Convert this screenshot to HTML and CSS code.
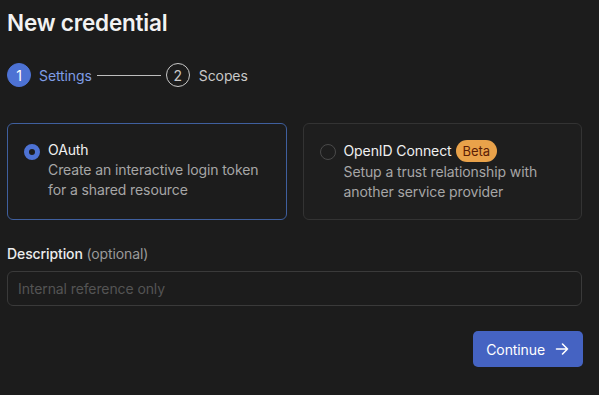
FILE: index.html
```html
<!DOCTYPE html>
<html lang="en">
<head>
    <meta charset="UTF-8">
    <meta name="viewport" content="width=device-width, initial-scale=1.0">
    <title>New credential</title>
    <link rel="stylesheet" href="styles.css">
</head>
<body>
    <main class="page">
        <h1 class="title">New credential</h1>

        <!-- Steps -->
        <div class="steps">
            <div class="step active">
                <span class="step-num">1</span>
                <span class="step-label">Settings</span>
            </div>
            <div class="step-line"></div>
            <div class="step">
                <span class="step-num">2</span>
                <span class="step-label">Scopes</span>
            </div>
        </div>

        <!-- Credential type -->
        <div class="options">
            <label class="option selected">
                <span class="radio"></span>
                <span class="option-text">
                    <span class="option-title">OAuth</span>
                    <span class="option-desc">Create an interactive login token for a shared resource</span>
                </span>
            </label>
            <label class="option">
                <span class="radio"></span>
                <span class="option-text">
                    <span class="option-title">OpenID Connect <span class="badge">Beta</span></span>
                    <span class="option-desc">Setup a trust relationship with another service provider</span>
                </span>
            </label>
        </div>

        <div class="field">
            <div class="field-label">Description <span class="muted">(optional)</span></div>
            <input class="input" type="text" placeholder="Internal reference only">
        </div>

        <div class="actions">
            <button class="btn-primary">
                Continue
                <svg width="16" height="16" viewBox="0 0 16 16" fill="none" stroke="currentColor" stroke-width="1.6" stroke-linecap="round" stroke-linejoin="round">
                    <path d="M2.5 8h11M8.5 3l5 5-5 5"/>
                </svg>
            </button>
        </div>
    </main>
</body>
</html>
```

FILE: styles.css
```css
body {
    margin: 0;
    padding: 0;
    background-color: #1c1c1c;
    color: #ececec;
    font-family: Inter, "Noto Sans", sans-serif;
    font-size: 14px;
    letter-spacing: -0.1px;
}
.page {
    width: 575px;
    padding: 8px 7px;
}
.title {
    margin: 0;
    font-size: 22.5px;
    line-height: 30px;
    font-weight: 600;
    color: #f2f2f2;
    letter-spacing: -0.2px;
}
/* Steps */
.steps {
    display: flex;
    align-items: center;
    margin-top: 25px;
    height: 24px;
}
.step {
    display: flex;
    align-items: center;
    gap: 8px;
    color: #c8c8c8;
}
.step-num {
    width: 22px;
    height: 22px;
    border: 1px solid #c8c8c8;
    border-radius: 50%;
    display: flex;
    align-items: center;
    justify-content: center;
    font-size: 14px;
}
.step.active {
    color: #7f9de6;
}
.step.active .step-num {
    background-color: #4d72d4;
    border-color: #4d72d4;
    color: #ffffff;
}
.step + .step-line,
.step-line + .step {
    margin-left: 5px;
}
.step-line {
    width: 64px;
    height: 1px;
    background-color: #bdbdbd;
}
.step:last-child {
    gap: 9px;
}
/* Options */
.options {
    display: grid;
    grid-template-columns: 1fr 1fr;
    gap: 16px;
    margin-top: 36px;
}
.option {
    display: flex;
    align-items: flex-start;
    gap: 8px;
    padding: 16px 16px 17px 16px;
    border: 1px solid #333333;
    border-radius: 6px;
    background-color: #1e1e1e;
    min-height: 61px;
}
.option.selected {
    border-color: #3f5f9e;
    background-color: #1c1c1c;
}
.radio {
    flex: none;
    width: 14px;
    height: 14px;
    margin-top: 4px;
    border: 1px solid #4a4a4a;
    border-radius: 50%;
    box-sizing: content-box;
}
.option.selected .radio {
    width: 6px;
    height: 6px;
    border: 5px solid #4d72d4;
    background-color: #1c1c1c;
}
.option-text {
    display: flex;
    flex-direction: column;
}
.option-title {
    display: flex;
    align-items: center;
    gap: 4px;
    line-height: 20px;
    color: #f0f0f0;
}
.option-desc {
    line-height: 20px;
    color: #a6a6a6;
}
.badge {
    background-color: #e9a24a;
    color: #5c1d05;
    font-size: 13px;
    line-height: 22px;
    padding: 0 7px;
    border-radius: 11px;
}
/* Field */
.field {
    margin-top: 24px;
}
.field-label {
    line-height: 20px;
    color: #ececec;
    font-weight: 500;
}
.muted {
    color: #9a9a9a;
    font-weight: 400;
}
.input {
    display: block;
    box-sizing: border-box;
    width: 100%;
    height: 35px;
    margin-top: 7px;
    padding: 0 10px;
    border: 1px solid #3a3a3a;
    border-radius: 6px;
    background-color: #1c1c1c;
    color: #ececec;
    font-family: inherit;
    font-size: 14px;
    letter-spacing: -0.1px;
}
.input::placeholder {
    color: #545454;
}
/* Actions */
.actions {
    display: flex;
    justify-content: flex-end;
    margin-top: 25px;
}
.btn-primary {
    display: flex;
    align-items: center;
    gap: 9px;
    height: 36px;
    padding: 0 13px;
    margin-right: -1px;
    border: none;
    border-radius: 5px;
    background-color: #4563c2;
    color: #ffffff;
    font-family: inherit;
    font-size: 14px;
    letter-spacing: -0.1px;
    cursor: pointer;
}
```
